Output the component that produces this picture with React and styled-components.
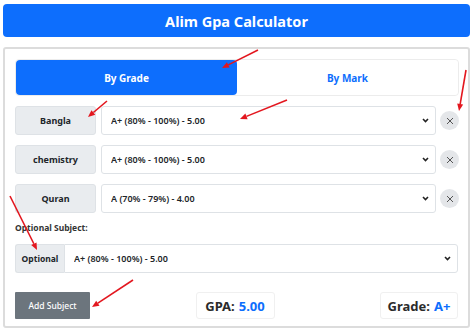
import React from 'react';
import styled, { createGlobalStyle } from 'styled-components';

const GlobalStyle = createGlobalStyle`
  body {
    margin: 0;
    background: #ffffff;
    font-family: 'Noto Sans', 'Open Sans', sans-serif;
    color: #212529;
  }
`;

const Page = styled.div`
  position: relative;
  width: 474px;
  height: 334px;
  padding: 4px 4px 0 3px;
  box-sizing: border-box;
  overflow: hidden;
`;

const Header = styled.h1`
  margin: 0;
  height: 33px;
  background: #0d6efd;
  border-radius: 4px;
  color: #fff;
  font-size: 14.5px;
  font-weight: 700;
  display: flex;
  align-items: center;
  justify-content: center;
`;

const Card = styled.div`
  margin-top: 10px;
  height: 281px;
  box-sizing: border-box;
  border: 2px solid #dcdcdc;
  border-radius: 3px;
  padding: 10px 9px 0 10px;
`;

const Tabs = styled.div`
  display: flex;
  height: 37px;
  box-sizing: border-box;
  border: 1px solid #ececec;
  border-radius: 4px;
`;

const Tab = styled.div`
  flex: 1;
  display: flex;
  align-items: center;
  justify-content: center;
  border-radius: 4px;
  font-size: 10px;
  font-weight: 700;
  background: ${p => (p.$active ? '#0d6efd' : '#fff')};
  color: ${p => (p.$active ? '#fff' : '#0d6efd')};
`;

const Rows = styled.div`
  display: flex;
  flex-direction: column;
  gap: 10px;
  margin-top: 10px;
`;

const Row = styled.div`
  display: flex;
  align-items: center;
  height: 29px;
`;

const SubjectLabel = styled.div`
  width: 81px;
  height: 29px;
  box-sizing: border-box;
  background: #e9ecef;
  border: 1px solid #dee2e6;
  border-radius: 3px;
  display: flex;
  align-items: center;
  justify-content: center;
  font-size: 9px;
  font-weight: 700;
  margin-right: 5px;
`;

const SelectWrap = styled.div`
  position: relative;
  flex: 1;
  height: 29px;
`;

const Select = styled.select`
  appearance: none;
  width: 100%;
  height: 100%;
  box-sizing: border-box;
  border: 1px solid #dee2e6;
  border-radius: ${p => (p.$joined ? '0 3px 3px 0' : '3px')};
  background: #fff;
  padding: 0 0 0 9px;
  font-family: 'Noto Sans', 'Open Sans', sans-serif;
  font-size: 9px;
  font-weight: 600;
  color: #212529;
  outline: none;
`;

const Chevron = styled.svg`
  position: absolute;
  right: 7px;
  top: 12px;
  pointer-events: none;
`;

const RemoveButton = styled.button`
  width: 19px;
  height: 19px;
  margin-left: 4px;
  border-radius: 50%;
  border: none;
  background: #e4e6e9;
  padding: 0;
  display: flex;
  align-items: center;
  justify-content: center;
`;

const OptionalTitle = styled.div`
  margin-top: 9px;
  font-size: 8.5px;
  font-weight: 700;
  color: #333;
`;

const InputGroup = styled.div`
  display: flex;
  height: 29px;
  margin-top: 11px;
  margin-right: 1px;
`;

const GroupLabel = styled.div`
  width: 49px;
  box-sizing: border-box;
  background: #e9ecef;
  border: 1px solid #dee2e6;
  border-right: none;
  border-radius: 3px 0 0 3px;
  display: flex;
  align-items: center;
  justify-content: center;
  font-size: 8.5px;
  font-weight: 700;
`;

const Footer = styled.div`
  display: flex;
  justify-content: space-between;
  align-items: center;
  margin-top: 19px;
  margin-right: 1px;
`;

const AddButton = styled.button`
  width: 75px;
  height: 27px;
  border: none;
  border-radius: 1px;
  background: #6c757d;
  color: #fff;
  font-family: 'Noto Sans', 'Open Sans', sans-serif;
  font-size: 8.5px;
  font-weight: 500;
  padding: 0;
`;

const ResultBox = styled.div`
  width: ${p => p.$w}px;
  height: 27px;
  box-sizing: border-box;
  border: 1px solid #f0f0f0;
  border-radius: 3px;
  display: flex;
  align-items: center;
  justify-content: center;
  font-size: 13px;
  font-weight: 700;
  color: #2b2b2b;
`;

const Value = styled.span`
  color: #0d6efd;
  margin-left: 4px;
`;

const Arrows = styled.svg`
  position: absolute;
  left: 0;
  top: 0;
  pointer-events: none;
`;

const grades = [
  'A+ (80% - 100%) - 5.00',
  'A (70% - 79%) - 4.00',
  'A- (60% - 69%) - 3.50',
  'B (50% - 59%) - 3.00',
  'C (40% - 49%) - 2.00',
  'D (33% - 39%) - 1.00',
  'F (0% - 32%) - 0.00',
];

const subjects = [
  { name: 'Bangla', grade: grades[0] },
  { name: 'chemistry', grade: grades[0] },
  { name: 'Quran', grade: grades[1] },
];

function GradeSelect({ value, joined }) {
  return (
    <SelectWrap>
      <Select defaultValue={value} $joined={joined}>
        {grades.map(g => <option key={g}>{g}</option>)}
      </Select>
      <Chevron width="7" height="5" viewBox="0 0 7 5">
        <path d="M1 1l2.5 2.5L6 1" fill="none" stroke="#222" strokeWidth="1.6" />
      </Chevron>
    </SelectWrap>
  );
}

// red annotation arrows drawn over the screenshot
const arrowLines = [
  [258, 50, 222, 68],
  [107, 101, 88, 117],
  [287, 100, 240, 119],
  [466, 70, 459, 111],
  [10, 196, 37, 250],
  [133, 280, 92, 307],
];

function Arrow({ x1, y1, x2, y2 }) {
  const a = Math.atan2(y2 - y1, x2 - x1);
  const len = 7;
  const w = 3;
  const bx = x2 - Math.cos(a) * len;
  const by = y2 - Math.sin(a) * len;
  const px = -Math.sin(a) * w;
  const py = Math.cos(a) * w;
  return (
    <g>
      <line x1={x1} y1={y1} x2={bx} y2={by} stroke="#e3171f" strokeWidth="1.6" />
      <polygon points={`${x2},${y2} ${bx + px},${by + py} ${bx - px},${by - py}`} fill="#e3171f" />
    </g>
  );
}

export default function App() {
  return (
    <>
      <GlobalStyle />
      <Page>
        <Header>Alim Gpa Calculator</Header>
        <Card>
          <Tabs>
            <Tab $active>By Grade</Tab>
            <Tab>By Mark</Tab>
          </Tabs>
          <Rows>
            {subjects.map(s => (
              <Row key={s.name}>
                <SubjectLabel>{s.name}</SubjectLabel>
                <GradeSelect value={s.grade} />
                <RemoveButton aria-label="remove">
                  <svg width="8" height="8" viewBox="0 0 8 8">
                    <path d="M1 1l6 6M7 1L1 7" stroke="#555" strokeWidth="1" />
                  </svg>
                </RemoveButton>
              </Row>
            ))}
          </Rows>
          <OptionalTitle>Optional Subject:</OptionalTitle>
          <InputGroup>
            <GroupLabel>Optional</GroupLabel>
            <GradeSelect value={grades[0]} joined />
          </InputGroup>
          <Footer>
            <AddButton>Add Subject</AddButton>
            <ResultBox $w={79}>GPA:<Value>5.00</Value></ResultBox>
            <ResultBox $w={78}>Grade:<Value>A+</Value></ResultBox>
          </Footer>
        </Card>
        <Arrows width="474" height="334">
          {arrowLines.map(([x1, y1, x2, y2], i) => (
            <Arrow key={i} x1={x1} y1={y1} x2={x2} y2={y2} />
          ))}
        </Arrows>
      </Page>
    </>
  );
}
